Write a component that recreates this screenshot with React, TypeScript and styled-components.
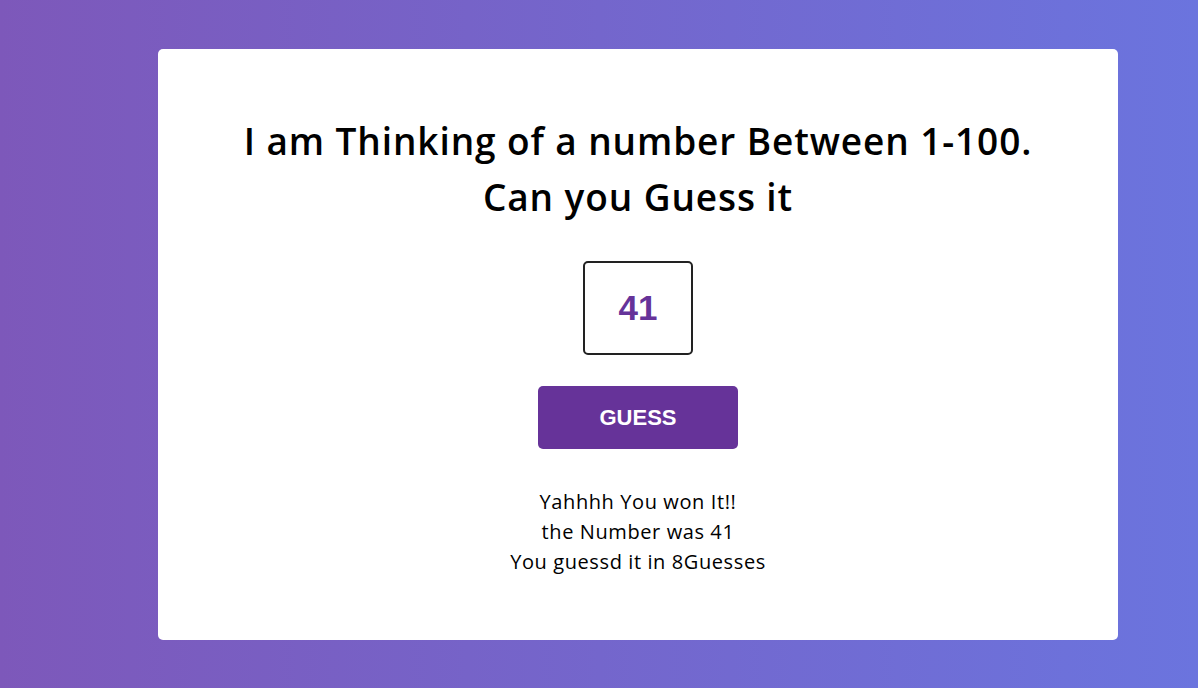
import React from "react";
import styled, { createGlobalStyle } from "styled-components";

const GlobalStyle = createGlobalStyle`
  html, body { margin: 0; padding: 0; }
  body {
    width: 1198px;
    height: 688px;
    overflow: hidden;
    background: linear-gradient(to right, #7d58ba, #6b74de);
    font-family: "Open Sans", "Liberation Sans", sans-serif;
  }
`;

const Page = styled.div`
  display: flex;
  padding: 49px 0 0 158px;
  height: 688px;
  box-sizing: border-box;
`;

const Card = styled.main`
  width: 960px;
  height: 591px;
  box-sizing: border-box;
  background: #fff;
  border-radius: 5px;
  display: flex;
  flex-direction: column;
  align-items: center;
  padding-top: 64px;
`;

const Title = styled.h1`
  margin: 0;
  font-family: "Open Sans", sans-serif;
  font-weight: 600;
  font-size: 37px;
  letter-spacing: 0.9px;
  line-height: 56px;
  color: #000;
  text-align: center;
`;

const NumberInput = styled.input`
  margin-top: 36px;
  width: 110px;
  height: 94px;
  box-sizing: border-box;
  border: 2px solid #222;
  border-radius: 5px;
  font-family: "Liberation Sans", Arial, sans-serif;
  font-weight: bold;
  font-size: 35px;
  color: #663399;
  text-align: center;
  outline: none;
  background: #fff;
`;

const GuessButton = styled.button`
  margin-top: 31px;
  width: 200px;
  height: 63px;
  border: none;
  border-radius: 5px;
  background: #663399;
  color: #fff;
  font-family: "Liberation Sans", Arial, sans-serif;
  font-weight: bold;
  font-size: 22px;
  cursor: pointer;
`;

const Message = styled.p`
  margin: 38px 0 0;
  font-family: "Open Sans", sans-serif;
  font-size: 20px;
  letter-spacing: 0.6px;
  line-height: 30px;
  color: #000;
  text-align: center;
`;

export default function App() {
  return (
    <>
      <GlobalStyle />
      <Page>
        <Card>
          <Title>
            I am Thinking of a number Between 1-100.
            <br />
            Can you Guess it
          </Title>
          <NumberInput type="text" defaultValue="41" />
          <GuessButton>GUESS</GuessButton>
          <Message>
            Yahhhh You won It!!
            <br />
            the Number was 41
            <br />
            You guessd it in 8Guesses
          </Message>
        </Card>
      </Page>
    </>
  );
}
